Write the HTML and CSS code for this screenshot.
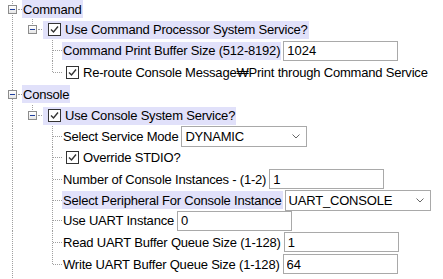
FILE: index.html
```html
<!DOCTYPE html>
<html lang="ko">
<head>
    <meta charset="UTF-8">
    <title>Configuration Options</title>
    <link rel="stylesheet" href="styles.css">
</head>
<body>
    <div class="tree">
        <div class="row r1">
            <span class="cell pipe"><span class="exp"></span><span class="hline"></span></span>
            <span class="label hl">Command</span>
        </div>
        <div class="row r2">
            <span class="cell pipe"></span>
            <span class="cell top"><span class="exp"></span><span class="hline"></span></span>
            <span class="label hl chk1"><svg class="box" width="13" height="13" viewBox="0 0 13 13"><rect x="0.5" y="0.5" width="12" height="12" fill="#fff" stroke="#333"/><path d="M3 6.5 L5.5 9 L10 3.5" fill="none" stroke="#333" stroke-width="1.4"/></svg>Use Command Processor System Service?</span>
        </div>
        <div class="row r3">
            <span class="cell pipe"></span>
            <span class="cell"></span>
            <span class="cell pipe"><span class="hline full"></span></span>
            <span class="label hl">Command Print Buffer Size (512-8192)</span>
            <input class="num" type="text" value="1024">
        </div>
        <div class="row r4">
            <span class="cell pipe"></span>
            <span class="cell"></span>
            <span class="cell top"><span class="hline full"></span></span>
            <span class="label chk2"><svg class="box" width="13" height="13" viewBox="0 0 13 13"><rect x="0.5" y="0.5" width="12" height="12" fill="#fff" stroke="#333"/><path d="M3 6.5 L5.5 9 L10 3.5" fill="none" stroke="#333" stroke-width="1.4"/></svg>Re-route Console Message₩Print through Command Service</span>
        </div>
        <div class="row r5">
            <span class="cell pipe"><span class="exp"></span><span class="hline"></span></span>
            <span class="label hl">Console</span>
        </div>
        <div class="row r6">
            <span class="cell pipe"></span>
            <span class="cell top"><span class="exp"></span><span class="hline"></span></span>
            <span class="label hl chk1"><svg class="box" width="13" height="13" viewBox="0 0 13 13"><rect x="0.5" y="0.5" width="12" height="12" fill="#fff" stroke="#333"/><path d="M3 6.5 L5.5 9 L10 3.5" fill="none" stroke="#333" stroke-width="1.4"/></svg>Use Console System Service?</span>
        </div>
        <div class="row r7">
            <span class="cell pipe"></span>
            <span class="cell"></span>
            <span class="cell pipe"><span class="hline full"></span></span>
            <span class="label">Select Service Mode</span>
            <span class="select mode">DYNAMIC<svg width="8" height="5" viewBox="0 0 8 5"><path d="M0.5 0.5 L4 4 L7.5 0.5" fill="none" stroke="#666"/></svg></span>
        </div>
        <div class="row r8">
            <span class="cell pipe"></span>
            <span class="cell"></span>
            <span class="cell pipe"><span class="hline full"></span></span>
            <span class="label chk2"><svg class="box" width="13" height="13" viewBox="0 0 13 13"><rect x="0.5" y="0.5" width="12" height="12" fill="#fff" stroke="#333"/><path d="M3 6.5 L5.5 9 L10 3.5" fill="none" stroke="#333" stroke-width="1.4"/></svg>Override STDIO?</span>
        </div>
        <div class="row r9">
            <span class="cell pipe"></span>
            <span class="cell"></span>
            <span class="cell pipe"><span class="hline full"></span></span>
            <span class="label">Number of Console Instances - (1-2)</span>
            <input class="num" type="text" value="1">
        </div>
        <div class="row r10">
            <span class="cell pipe"></span>
            <span class="cell"></span>
            <span class="cell pipe"><span class="hline full"></span></span>
            <span class="label hl">Select Peripheral For Console Instance</span>
            <span class="select periph">UART_CONSOLE<svg width="8" height="5" viewBox="0 0 8 5"><path d="M0.5 0.5 L4 4 L7.5 0.5" fill="none" stroke="#666"/></svg></span>
        </div>
        <div class="row r11">
            <span class="cell pipe"></span>
            <span class="cell"></span>
            <span class="cell pipe"><span class="hline full"></span></span>
            <span class="label">Use UART Instance</span>
            <input class="num" type="text" value="0">
        </div>
        <div class="row r12">
            <span class="cell pipe"></span>
            <span class="cell"></span>
            <span class="cell pipe"><span class="hline full"></span></span>
            <span class="label">Read UART Buffer Queue Size (1-128)</span>
            <input class="num" type="text" value="1">
        </div>
        <div class="row r13">
            <span class="cell pipe"></span>
            <span class="cell"></span>
            <span class="cell top"><span class="hline full"></span></span>
            <span class="label">Write UART Buffer Queue Size (1-128)</span>
            <input class="num" type="text" value="64">
        </div>
        <div class="row r14">
            <span class="cell pipe"><span class="exp"></span><span class="hline"></span></span>
            <span class="label">Debug</span>
        </div>
    </div>
</body>
</html>
```

FILE: styles.css
```css
body {
    margin: 0;
    background: #fff;
    font-family: "Liberation Sans", Arial, sans-serif;
    font-size: 13px;
    letter-spacing: -0.2px;
    color: #000;
    overflow: hidden;
}
.tree {
    padding-left: 2px;
    margin-top: -1px;
}
.row {
    display: flex;
    align-items: stretch;
    height: 21px;
}
.r1 { height: 20px; }
.r4, .r5, .r9, .r12, .r13 { height: 22px; }
.r10 { height: 20px; }

/* tree connector cells */
.cell {
    flex: none;
    width: 20px;
    display: flex;
    align-items: center;
}
.pipe {
    background: repeating-linear-gradient(to bottom, #a0a0a0 0 1px, transparent 1px 2px) 10px 0 / 1px 100% no-repeat;
}
.top {
    background: repeating-linear-gradient(to bottom, #a0a0a0 0 1px, transparent 1px 2px) 10px 0 / 1px 50% no-repeat;
}
.hline {
    flex: 1;
    height: 0;
    border-top: 1px dotted #a0a0a0;
    margin-left: 1px;
}
.hline.full {
    margin-left: 11px;
}
.exp {
    flex: none;
    width: 7px;
    height: 7px;
    margin-left: 6px;
    border: 1px solid #8c8c8c;
    background: linear-gradient(#fff, #e6e6e6);
    position: relative;
}
.exp::after {
    content: "";
    position: absolute;
    left: 1px;
    top: 3px;
    width: 5px;
    height: 1px;
    background: #1f3f9f;
}

/* labels */
.label {
    align-self: center;
    display: flex;
    align-items: center;
    height: 18px;
    padding: 0 1px;
    white-space: nowrap;
}
.hl {
    background: #e1e1fa;
}
.chk1 {
    padding-left: 5px;
    margin-left: 1px;
}
.chk2 {
    padding-left: 4px;
}
.box {
    flex: none;
    margin-right: 4px;
}

/* fields */
.num {
    align-self: center;
    box-sizing: border-box;
    width: 115px;
    height: 20px;
    margin: 0 0 0 2px;
    padding: 0 3px;
    border: 1px solid #a9a9a9;
    font: inherit;
    color: #000;
    outline: none;
}
.select {
    align-self: center;
    box-sizing: border-box;
    display: flex;
    align-items: center;
    justify-content: space-between;
    height: 21px;
    margin-left: 2px;
    padding: 0 6px 0 3px;
    border: 1px solid #a9a9a9;
    background: #fff;
}
.mode {
    width: 126px;
}
.periph {
    width: 146px;
}
```
